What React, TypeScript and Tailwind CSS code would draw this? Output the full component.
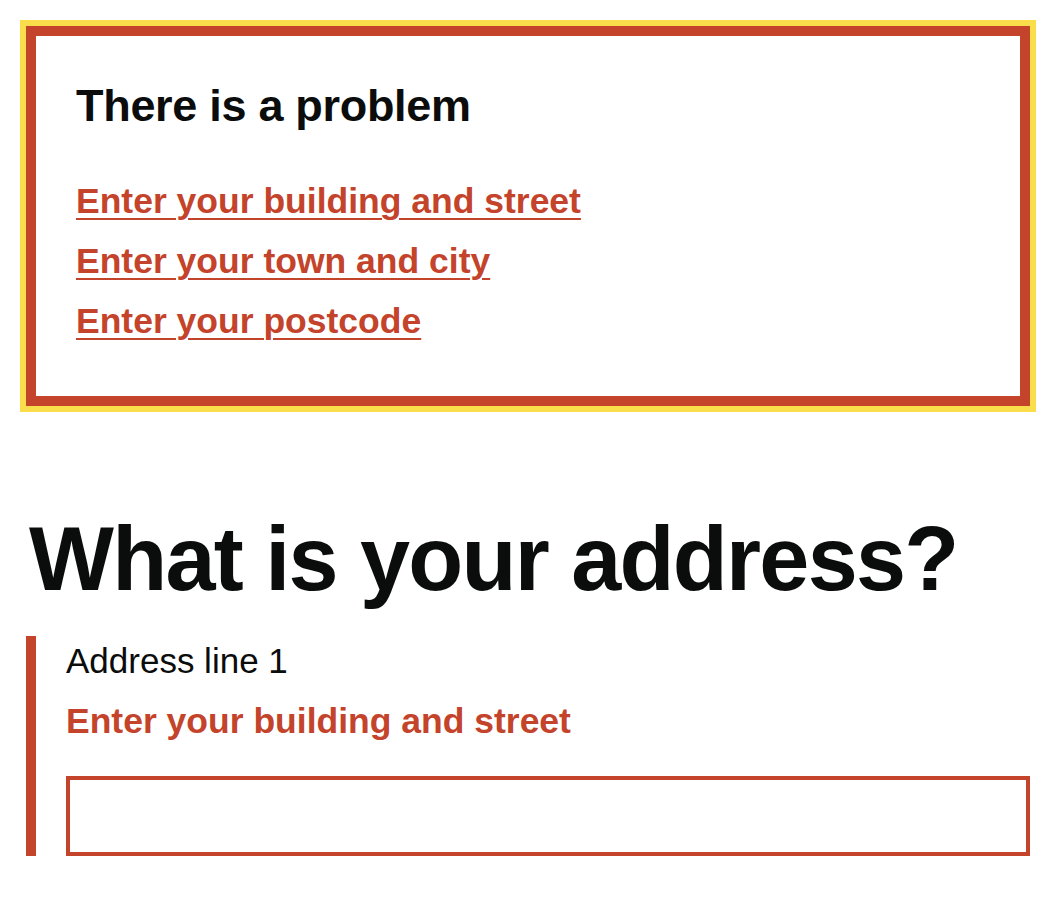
export default function App() {
  const links = [
    "Enter your building and street",
    "Enter your town and city",
    "Enter your postcode",
  ];
  return (
    <div className="min-h-screen bg-white pl-[26px] pr-[28px] pt-[26px] text-[#0b0c0c] font-['Liberation_Sans','Arial',sans-serif]">
      <div
        className="mb-[103px] border-[10px] border-[#c4432b] bg-white px-[40px] pt-[40px] pb-[40px] shadow-[0_0_0_6px_#f9dd4b]"
        role="alert"
      >
        <h2 className="mb-[40px] text-[45px] font-bold leading-[60px] tracking-[-0.3px]">
          There is a problem
        </h2>
        <ul>
          {links.map((l) => (
            <li key={l} className="mb-[10px] text-[35.5px] font-bold leading-[50px]">
              <a
                href="#"
                className="text-[#c4432b] underline decoration-2 underline-offset-[5px]"
              >
                {l}
              </a>
            </li>
          ))}
        </ul>
      </div>

      <h1 className="mb-[27px] pl-[3px] text-[90px] font-bold leading-[100px] tracking-[-1.75px]">
        What is your address?
      </h1>

      <div className="border-l-[10px] border-[#c4432b] pl-[30px]">
        <label
          htmlFor="address-line-1"
          className="mb-[10px] block text-[35px] leading-[50px]"
        >
          Address line 1
        </label>
        <p className="mb-[30px] text-[35.5px] font-bold leading-[50px] text-[#c4432b]">
          Enter your building and street
        </p>
        <input
          id="address-line-1"
          type="text"
          className="block h-[80px] w-full border-4 border-[#c4432b] bg-white px-[10px] text-[35px] outline-none"
        />
      </div>
    </div>
  );
}
